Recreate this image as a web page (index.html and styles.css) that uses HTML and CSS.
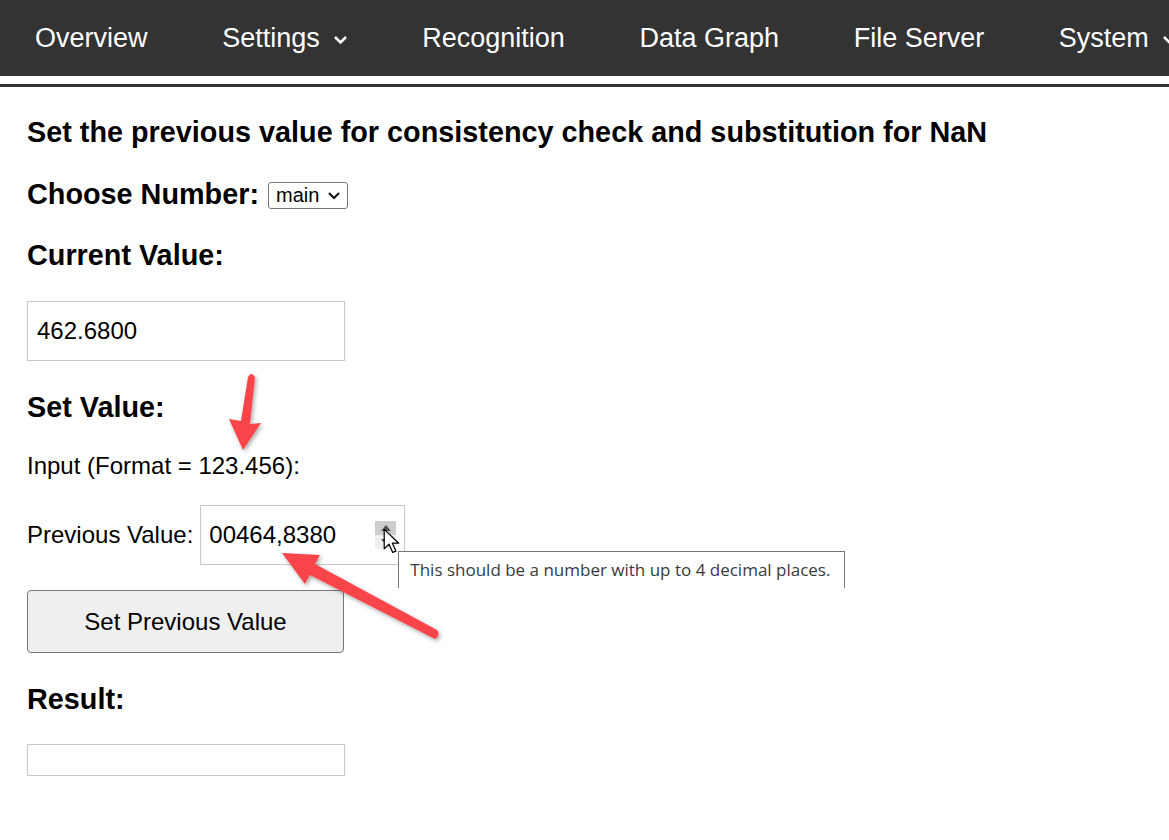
FILE: index.html
```html
<!DOCTYPE html>
<html>
<head>
<meta charset="utf-8">
<link rel="stylesheet" href="styles.css">
</head>
<body>
<nav class="nav">
  <span class="nav-item">Overview</span>
  <span class="nav-item">Settings<svg class="chev" viewBox="0 0 15 10" width="15" height="10"><path d="M2 2 L7.5 7.5 L13 2" fill="none" stroke="#fff" stroke-width="2.6"/></svg></span>
  <span class="nav-item">Recognition</span>
  <span class="nav-item">Data Graph</span>
  <span class="nav-item">File Server</span>
  <span class="nav-item">System<svg class="chev" viewBox="0 0 15 10" width="15" height="10"><path d="M2 2 L7.5 7.5 L13 2" fill="none" stroke="#fff" stroke-width="2.6"/></svg></span>
</nav>
<div class="rule"></div>
<main class="main">
  <h2 class="title">Set the previous value for consistency check and substitution for NaN</h2>
  <div class="choose">
    <h3 class="h3 inline">Choose Number:</h3>
    <div class="select"><span>main</span><svg viewBox="0 0 14 9" width="14" height="9"><path d="M2 2 L7 7 L12 2" fill="none" stroke="#111" stroke-width="2"/></svg></div>
  </div>
  <h3 class="h3 current">Current Value:</h3>
  <div class="box box-current">462.6800</div>
  <h3 class="h3 setvalue">Set Value:</h3>
  <p class="hint">Input (Format = 123.456):</p>
  <div class="prev-row">
    <span class="label">Previous Value:</span>
    <div class="prev-wrap">
      <div class="box box-prev">00464,8380</div>
      <div class="spin">
        <div class="spin-up"><svg viewBox="0 0 10 6" width="10" height="6"><path d="M0 6 L5 0 L10 6 Z" fill="#505050"/></svg></div>
        <div class="spin-down"><svg viewBox="0 0 10 6" width="10" height="6"><path d="M0 0 L10 0 L5 6 Z" fill="#505050"/></svg></div>
      </div>
      <svg class="cursor" viewBox="0 0 14 22" width="17" height="27"><path d="M1 1 L1 17 L5 13.2 L8 20 L10.6 18.9 L7.7 12.4 L13 12.4 Z" fill="#fff" stroke="#000" stroke-width="1" stroke-linejoin="round"/></svg>
      <div class="tooltip">This should be a number with up to 4 decimal places.</div>
    </div>
  </div>
  <button class="btn">Set Previous Value</button>
  <h3 class="h3 result">Result:</h3>
  <div class="box box-result"></div>
</main>
<svg class="arrows" viewBox="0 0 1169 840" width="1169" height="840">
  <defs>
    <filter id="sh" x="-20%" y="-20%" width="140%" height="140%">
      <feDropShadow dx="1.5" dy="2" stdDeviation="2" flood-color="#000" flood-opacity="0.35"/>
    </filter>
  </defs>
  <g filter="url(#sh)" fill="#f7444a">
    <path d="M248 377 Q251 371 255 377 L250 424 L261 423 L243 450 L229 419 L241 421 Z"/>
    <path d="M437 630 Q441 635 435 639 L310 575 L305 584 L282 553 L320 555 L315 564 Z"/>
  </g>
</svg>
</body>
</html>
```
FILE: styles.css
```css
html, body {
  margin: 0;
  padding: 0;
  background: #fff;
}
body {
  font-family: "Liberation Sans", Arial, sans-serif;
  color: #000;
  width: 1169px;
  height: 840px;
  overflow: hidden;
  position: relative;
}
.nav {
  height: 76px;
  background: #333;
  display: flex;
  align-items: center;
  gap: 74.6px;
  padding-left: 35px;
  white-space: nowrap;
  overflow: hidden;
  color: #fff;
  font-size: 27px;
}
.nav-item {
  display: flex;
  align-items: center;
  flex-shrink: 0;
}
.chev {
  margin-left: 13px;
  margin-top: 4px;
}
.rule {
  margin-top: 8px;
  height: 3px;
  background: #333;
}
.main {
  padding: 0 27px;
}
.title {
  margin: 28.5px 0 0;
  font-size: 28.8px;
  line-height: 33px;
  font-weight: bold;
}
.h3 {
  margin: 0;
  font-size: 28.8px;
  line-height: 33px;
  font-weight: bold;
}
.choose {
  margin-top: 29px;
  height: 33px;
  display: flex;
  align-items: center;
}
.select {
  margin-left: 9px;
  margin-top: 3px;
  width: 80px;
  height: 27px;
  box-sizing: border-box;
  border: 1px solid #767676;
  border-radius: 3px;
  display: flex;
  align-items: center;
  padding-left: 7px;
  font-size: 20px;
  gap: 8px;
}
.current { margin-top: 28px; }
.box {
  box-sizing: border-box;
  border: 1px solid #c8c8c8;
  font-size: 24px;
  display: flex;
  align-items: center;
  padding-left: 9px;
  background: #fff;
}
.box-current {
  margin-top: 29.5px;
  width: 318px;
  height: 60px;
}
.setvalue { margin-top: 29.5px; }
.hint {
  margin: 28.5px 0 0;
  font-size: 24px;
  line-height: 28px;
}
.prev-row {
  margin-top: 25px;
  height: 60px;
  display: flex;
  align-items: center;
}
.label {
  font-size: 24px;
  margin-right: 7px;
}
.prev-wrap {
  position: relative;
  width: 205px;
  height: 60px;
}
.box-prev {
  width: 205px;
  height: 60px;
  padding-left: 8px;
}
.spin {
  position: absolute;
  left: 175px;
  top: 16px;
  width: 21px;
  height: 28px;
  display: flex;
  flex-direction: column;
}
.spin-up, .spin-down {
  flex: 1;
  display: flex;
  align-items: center;
  justify-content: center;
}
.spin-up { background: #cdcdcd; }
.spin-down { background: #efefef; }
.cursor {
  position: absolute;
  left: 183px;
  top: 23px;
}
.tooltip {
  position: absolute;
  left: 198px;
  top: 46px;
  width: 447px;
  height: 37px;
  box-sizing: border-box;
  border: 1px solid #767676;
  border-bottom: none;
  background: #fff;
  font-family: "Open Sans", "Noto Sans", sans-serif;
  font-size: 17px;
  color: #3a3a3a;
  white-space: nowrap;
  padding: 6px 0 0 11px;
  overflow: hidden;
}
.btn {
  display: block;
  margin-top: 25px;
  width: 317px;
  height: 63px;
  background: #efefef;
  border: 1px solid #767676;
  border-radius: 4px;
  font-family: "Liberation Sans", Arial, sans-serif;
  font-size: 24px;
  color: #000;
  padding: 0;
}
.result { margin-top: 29.5px; }
.box-result {
  margin-top: 28.5px;
  width: 318px;
  height: 32px;
}
.arrows {
  position: absolute;
  left: 0;
  top: 0;
  pointer-events: none;
}
```
